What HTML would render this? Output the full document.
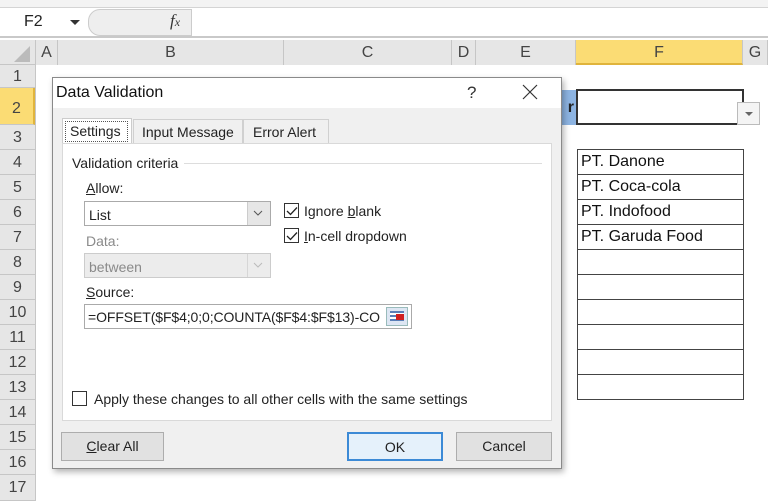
<!DOCTYPE html>
<html><head><meta charset="utf-8"><style>
*{box-sizing:border-box;margin:0;padding:0}
body{width:768px;height:501px;overflow:hidden;background:#fff;font-family:"Liberation Sans",sans-serif;position:relative}
.a{position:absolute}
.t{font-size:14px;color:#222}
.hdr{background:#e6e6e6;border-right:1px solid #c6c6c6;color:#444;font-size:16px;text-align:center}
.rn{position:absolute;left:0;width:35px;background:#e6e6e6;border-bottom:1px solid #c6c6c6;color:#444;font-size:16px;text-align:center}
.cell{position:absolute;left:577px;width:167px;height:25px;border:1px solid #444;border-top:none;font-size:16px;padding-left:3px;line-height:24px;color:#111}
.btn{position:absolute;height:29px;background:#e1e1e1;border:1px solid #adadad;font-size:14px;text-align:center;line-height:27px;color:#222}
.cb{position:absolute;width:15px;height:15px;border:1px solid #333;background:#fff}
</style></head><body>
<!-- ribbon strip -->
<div class="a" style="left:0;top:0;width:768px;height:8px;background:#f3f3f3;border-bottom:1px solid #d4d4d4"></div>
<!-- formula bar -->
<div class="a" style="left:0;top:8px;width:768px;height:30px;background:#fff;border-bottom:2px solid #c9c9c9"></div>
<div class="a" style="left:24px;top:13px;font-size:16px;color:#222">F2</div>
<div class="a" style="left:70px;top:20px;width:0;height:0;border-left:5px solid transparent;border-right:5px solid transparent;border-top:5px solid #333"></div>
<div class="a" style="left:88px;top:9px;width:104px;height:27px;background:#eee;border:1px solid #ccc;border-radius:12px 0 0 12px"></div>
<div class="a" style="left:170px;top:11px;font-family:'Liberation Serif',serif;font-style:italic;font-size:17px;color:#333">f<span style="font-size:12px">x</span></div>
<!-- column headers -->
<div class="a" style="left:0;top:40px;width:768px;height:25px;background:#e6e6e6;border-bottom:1px solid #c6c6c6"></div>
<div class="a" style="left:14px;top:46px;width:0;height:0;border-left:16px solid transparent;border-bottom:16px solid #bbb"></div>
<div class="a hdr" style="left:35px;top:40px;width:23px;height:25px;line-height:25px;border-left:1px solid #c6c6c6">A</div>
<div class="a hdr" style="left:58px;top:40px;width:226px;height:25px;line-height:25px">B</div>
<div class="a hdr" style="left:284px;top:40px;width:168px;height:25px;line-height:25px">C</div>
<div class="a hdr" style="left:452px;top:40px;width:24px;height:25px;line-height:25px">D</div>
<div class="a hdr" style="left:476px;top:40px;width:100px;height:25px;line-height:25px">E</div>
<div class="a hdr" style="left:576px;top:40px;width:167px;height:25px;line-height:25px;background:#fbdc74;border-bottom:2px solid #e0b43c">F</div>
<div class="a hdr" style="left:743px;top:40px;width:25px;height:25px;line-height:25px">G</div>
<!-- row headers -->
<div class="a" style="left:35px;top:65px;width:1px;height:436px;background:#c6c6c6"></div>
<div class="rn" style="top:65px;height:23px;line-height:23px">1</div>
<div class="rn" style="top:88px;height:37px;line-height:42px;background:#fbdc74;border-right:2px solid #e0b43c">2</div>
<div class="rn" style="top:125px;height:25px;line-height:25px">3</div>
<div class="rn" style="top:150px;height:25px;line-height:25px">4</div>
<div class="rn" style="top:175px;height:25px;line-height:25px">5</div>
<div class="rn" style="top:200px;height:25px;line-height:25px">6</div>
<div class="rn" style="top:225px;height:25px;line-height:25px">7</div>
<div class="rn" style="top:250px;height:25px;line-height:25px">8</div>
<div class="rn" style="top:275px;height:25px;line-height:25px">9</div>
<div class="rn" style="top:300px;height:25px;line-height:25px">10</div>
<div class="rn" style="top:325px;height:25px;line-height:25px">11</div>
<div class="rn" style="top:350px;height:25px;line-height:25px">12</div>
<div class="rn" style="top:375px;height:25px;line-height:25px">13</div>
<div class="rn" style="top:400px;height:25px;line-height:25px">14</div>
<div class="rn" style="top:425px;height:25px;line-height:25px">15</div>
<div class="rn" style="top:450px;height:25px;line-height:25px">16</div>
<div class="rn" style="top:475px;height:26px;line-height:25px">17</div>
<!-- sheet content -->
<div class="a" style="left:540px;top:90px;width:36px;height:35px;background:#8db4e2;font-weight:bold;font-size:16px;line-height:35px;text-align:right;padding-right:2px;color:#222">r</div>
<div class="a" style="left:576px;top:89px;width:168px;height:36px;border:2px solid #333;background:#fff"></div>
<div class="a" style="left:737px;top:102px;width:23px;height:23px;background:#f4f4f4;border:1px solid #bbb"></div>
<div class="a" style="left:745px;top:112px;border-left:4px solid transparent;border-right:4px solid transparent;border-top:4px solid #666"></div>
<div class="a" style="left:577px;top:149px;width:167px;height:1px;background:#444"></div>
<div class="cell" style="top:150px">PT. Danone</div>
<div class="cell" style="top:175px">PT. Coca-cola</div>
<div class="cell" style="top:200px">PT. Indofood</div>
<div class="cell" style="top:225px">PT. Garuda Food</div>
<div class="cell" style="top:250px"></div>
<div class="cell" style="top:275px"></div>
<div class="cell" style="top:300px"></div>
<div class="cell" style="top:325px"></div>
<div class="cell" style="top:350px"></div>
<div class="cell" style="top:375px"></div>
<!-- dialog -->
<div class="a" style="left:52px;top:77px;width:510px;height:392px;background:#f0f0f0;border:1px solid #8a8a8a;box-shadow:2px 3px 6px rgba(0,0,0,.3)"></div>
<div class="a" style="left:53px;top:78px;width:508px;height:30px;background:#fff"></div>
<div class="a" style="left:56px;top:84px;font-size:16px;color:#111">Data Validation</div>
<div class="a" style="left:467px;top:83px;font-size:17px;color:#333">?</div>
<svg class="a" style="left:522px;top:84px" width="16" height="16"><path d="M1 1L15 15M15 1L1 15" stroke="#333" stroke-width="1.2"/></svg>
<!-- tabs -->
<div class="a" style="left:62px;top:118px;width:70px;height:26px;background:#fff;border:1px solid #ccc;border-bottom:none"></div>
<div class="a" style="left:65px;top:121px;width:63px;height:21px;border:1px dotted #555"></div>
<div class="a t" style="left:70px;top:123px">Settings</div>
<div class="a" style="left:133px;top:119px;width:110px;height:25px;background:#f0f0f0;border:1px solid #d0d0d0;border-bottom:none"></div>
<div class="a t" style="left:142px;top:124px">Input Message</div>
<div class="a" style="left:243px;top:119px;width:86px;height:25px;background:#f0f0f0;border:1px solid #d0d0d0;border-bottom:none"></div>
<div class="a t" style="left:253px;top:124px">Error Alert</div>
<div class="a" style="left:62px;top:143px;width:490px;height:278px;background:#fff;border:1px solid #d9d9d9"></div>
<div class="a t" style="left:72px;top:155px">Validation criteria</div>
<div class="a" style="left:184px;top:163px;width:358px;height:1px;background:#ddd"></div>
<div class="a t" style="left:86px;top:180px"><u>A</u>llow:</div>
<div class="a" style="left:84px;top:201px;width:187px;height:25px;border:1px solid #aaa;background:#fff"></div>
<div class="a" style="left:247px;top:202px;width:23px;height:23px;background:#e6e6e6;border-left:1px solid #ccc"></div>
<svg class="a" style="left:253px;top:210px" width="10" height="6"><path d="M1 1L5 5L9 1" stroke="#555" fill="none"/></svg>
<div class="a t" style="left:89px;top:207px">List</div>
<div class="a t" style="left:86px;top:233px;color:#8a8a8a">Data:</div>
<div class="a" style="left:84px;top:253px;width:187px;height:25px;border:1px solid #ccc;background:#ececec"></div>
<div class="a" style="left:247px;top:254px;width:23px;height:23px;border-left:1px solid #d6d6d6"></div>
<svg class="a" style="left:253px;top:262px" width="10" height="6"><path d="M1 1L5 5L9 1" stroke="#bbb" fill="none"/></svg>
<div class="a t" style="left:89px;top:259px;color:#8a8a8a">between</div>
<div class="a t" style="left:86px;top:284px"><u>S</u>ource:</div>
<div class="a" style="left:84px;top:304px;width:328px;height:25px;border:1px solid #aaa;background:#fff"></div>
<div class="a t" style="left:88px;top:309px;letter-spacing:-0.1px">=OFFSET($F$4;0;0;COUNTA($F$4:$F$13)-CO</div>
<div class="a" style="left:386px;top:307px;width:22px;height:19px;background:#dde6f3;border:1px solid #9bb"></div>
<div class="a" style="left:390px;top:311px;width:14px;height:10px;background:repeating-linear-gradient(#5a7fb8 0 2px,#fff 2px 4px)"></div>
<div class="a" style="left:396px;top:314px;width:8px;height:6px;background:#d02020"></div>
<div class="cb" style="left:284px;top:203px"></div>
<svg class="a" style="left:286px;top:206px" width="12" height="10"><path d="M1 5L4.5 8.5L11 1.5" stroke="#222" fill="none" stroke-width="1.3"/></svg>
<div class="a t" style="left:304px;top:203px">Ignore <u>b</u>lank</div>
<div class="cb" style="left:284px;top:228px"></div>
<svg class="a" style="left:286px;top:231px" width="12" height="10"><path d="M1 5L4.5 8.5L11 1.5" stroke="#222" fill="none" stroke-width="1.3"/></svg>
<div class="a t" style="left:304px;top:228px"><u>I</u>n-cell dropdown</div>
<div class="cb" style="left:72px;top:391px"></div>
<div class="a t" style="left:94px;top:391px">Apply these changes to all other cells with the same settings</div>
<div class="btn" style="left:61px;top:432px;width:103px"><u>C</u>lear All</div>
<div class="btn" style="left:347px;top:432px;width:96px;border:2px solid #3c8ad6;background:#e5f1fb">OK</div>
<div class="btn" style="left:456px;top:432px;width:96px">Cancel</div>
</body></html>
